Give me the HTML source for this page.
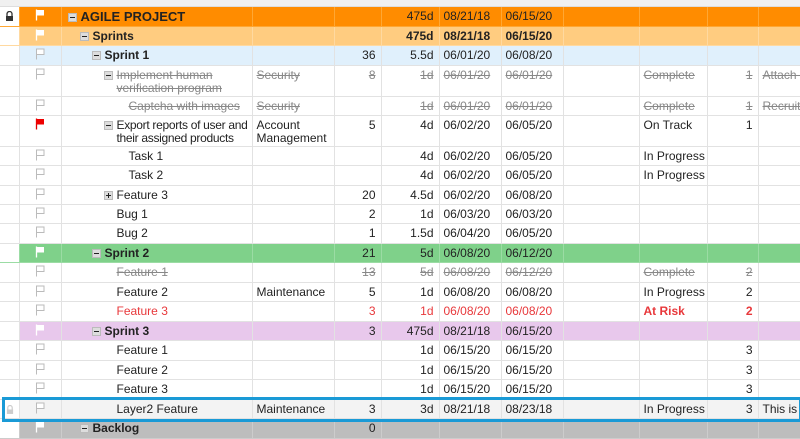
<!DOCTYPE html><html><head><style>
body{margin:0;width:800px;height:438px;overflow:hidden;background:#fff;font-family:"Liberation Sans",Arial,sans-serif;font-size:12px;color:#222}
.top{position:absolute;left:0;top:0;width:800px;height:7px;background:#f0f0f0;border-bottom:1px solid #ddd;box-sizing:border-box}
table{position:absolute;left:0;top:7px;border-collapse:collapse;table-layout:fixed;width:800px}
td{border-right:1px solid #e2e2e2;border-bottom:1px solid #e2e2e2;padding:3px 4px 0 4px;vertical-align:top;white-space:nowrap;overflow:hidden;line-height:13px;box-sizing:border-box}
td.r{text-align:right;padding-right:5px}
td.f{padding:2px 0 0 0}
td.f svg{display:block;margin:0 auto}
.b td{font-weight:bold}
.bx{display:inline-block;width:9px;height:9px;background:#ddd;border:1px solid #bbb;box-sizing:border-box;margin-right:4px;vertical-align:-1px;position:relative}
.bx:after{content:"";position:absolute;left:1px;top:3px;width:5px;height:1px;background:#222}
.pl:before{content:"";position:absolute;left:3px;top:1px;width:1px;height:5px;background:#222}
.s{text-decoration:line-through;color:#888}
.red td{color:#e8383b}
.o td{background:#ff8c00;border-color:#ffa733}
.lo td{background:#ffcc80;border-color:#ffd9a0}
.lb td{background:#e0f0fc}
.g td{background:#7fd18a;border-color:#9bdca4}
.p td{background:#e8c8ec}
.gr td{background:#bdbdbd;border-color:#ccc}
.sel td{background:#f3f3f3}
tr td:first-child{background:#fff}
.box{position:absolute;left:2px;top:397px;width:800px;height:25px;border:3px solid #1a9ad6;box-sizing:border-box}
</style></head><body>
<div class="top"></div>
<svg width="0" height="0" style="position:absolute"><defs>
<symbol id="fl" viewBox="0 0 10 12"><path d="M1.5 0.5V11.5M1.5 1H9V6.5H1.5" fill="#fff" stroke="#bbb" stroke-width="1"/></symbol>
<symbol id="fw" viewBox="0 0 10 12"><path d="M1.5 0.5V11.5" stroke="#fff" stroke-width="1.3"/><path d="M1 1H9V6.5H1z" fill="#fff"/></symbol>
<symbol id="fr" viewBox="0 0 10 12"><path d="M1.5 0.5V11.5" stroke="#d00" stroke-width="1.3"/><path d="M1 1H9V6.5H1z" fill="#e00"/></symbol>
</defs></svg>
<table>
<colgroup><col style="width:19px"><col style="width:42px"><col style="width:191px"><col style="width:82px"><col style="width:47px"><col style="width:58px"><col style="width:62px"><col style="width:62px"><col style="width:76px"><col style="width:68px"><col style="width:51px"><col style="width:42px"></colgroup>
<tr class="o" style="height:19px"><td style="padding:4px 0 0 5px"><svg width="9" height="10" viewBox="0 0 9 10" style="display:block"><path d="M2 5V3a2.5 2.5 0 0 1 5 0v2" fill="none" stroke="#333" stroke-width="1.3"/><rect x="1" y="5" width="7" height="5" fill="#333"/></svg></td><td class="f"><svg width="10" height="12"><use href="#fw"/></svg></td><td style="padding-left:6px;font-weight:bold;font-size:13px;padding-top:2px;line-height:15px"><span class="bx"></span>AGILE PROJECT</td><td></td><td></td><td class="r">475d</td><td>08/21/18</td><td>06/15/20</td><td></td><td></td><td></td><td></td></tr>
<tr class="lo b" style="height:19px"><td></td><td class="f"><svg width="10" height="12"><use href="#fw"/></svg></td><td style="padding-left:18px"><span class="bx"></span>Sprints</td><td></td><td></td><td class="r">475d</td><td>08/21/18</td><td>06/15/20</td><td></td><td></td><td></td><td></td></tr>
<tr class="lb" style="height:20px"><td></td><td class="f"><svg width="10" height="12"><use href="#fl"/></svg></td><td style="padding-left:30px;font-weight:bold"><span class="bx"></span>Sprint 1</td><td></td><td class="r">36</td><td class="r">5.5d</td><td>06/01/20</td><td>06/08/20</td><td></td><td></td><td></td><td></td></tr>
<tr style="height:31px"><td></td><td class="f"><svg width="10" height="12"><use href="#fl"/></svg></td><td style="padding-left:42px;position:relative"><span class="bx" style="position:absolute;left:42px;top:5px"></span><div class="s" style="padding-left:13px;line-height:13px">Implement human<br>verification program</div></td><td class="s">Security</td><td class="r s">8</td><td class="r s">1d</td><td class="s">06/01/20</td><td class="s">06/01/20</td><td></td><td class="s">Complete</td><td class="r s">1</td><td class="s">Attach the</td></tr>
<tr style="height:19px"><td></td><td class="f"><svg width="10" height="12"><use href="#fl"/></svg></td><td style="padding-left:67px" class="s">Captcha with images</td><td class="s">Security</td><td></td><td class="r s">1d</td><td class="s">06/01/20</td><td class="s">06/01/20</td><td></td><td class="s">Complete</td><td class="r s">1</td><td class="s">Recruited</td></tr>
<tr style="height:31px"><td></td><td class="f"><svg width="10" height="12"><use href="#fr"/></svg></td><td style="padding-left:42px;position:relative"><span class="bx" style="position:absolute;left:42px;top:5px"></span><div style="padding-left:13px;letter-spacing:-0.3px">Export reports of user and<br>their assigned products</div></td><td>Account<br>Management</td><td class="r">5</td><td class="r">4d</td><td>06/02/20</td><td>06/05/20</td><td></td><td>On Track</td><td class="r">1</td><td></td></tr>
<tr style="height:19px"><td></td><td class="f"><svg width="10" height="12"><use href="#fl"/></svg></td><td style="padding-left:67px">Task 1</td><td></td><td></td><td class="r">4d</td><td>06/02/20</td><td>06/05/20</td><td></td><td>In Progress</td><td></td><td></td></tr>
<tr style="height:20px"><td></td><td class="f"><svg width="10" height="12"><use href="#fl"/></svg></td><td style="padding-left:67px">Task 2</td><td></td><td></td><td class="r">4d</td><td>06/02/20</td><td>06/05/20</td><td></td><td>In Progress</td><td></td><td></td></tr>
<tr style="height:19px"><td></td><td class="f"><svg width="10" height="12"><use href="#fl"/></svg></td><td style="padding-left:42px"><span class="bx pl"></span>Feature 3</td><td></td><td class="r">20</td><td class="r">4.5d</td><td>06/02/20</td><td>06/08/20</td><td></td><td></td><td></td><td></td></tr>
<tr style="height:19px"><td></td><td class="f"><svg width="10" height="12"><use href="#fl"/></svg></td><td style="padding-left:55px">Bug 1</td><td></td><td class="r">2</td><td class="r">1d</td><td>06/03/20</td><td>06/03/20</td><td></td><td></td><td></td><td></td></tr>
<tr style="height:20px"><td></td><td class="f"><svg width="10" height="12"><use href="#fl"/></svg></td><td style="padding-left:55px">Bug 2</td><td></td><td class="r">1</td><td class="r">1.5d</td><td>06/04/20</td><td>06/05/20</td><td></td><td></td><td></td><td></td></tr>
<tr class="g b" style="height:19px"><td></td><td class="f"><svg width="10" height="12"><use href="#fw"/></svg></td><td style="padding-left:30px"><span class="bx"></span>Sprint 2</td><td></td><td class="r" style="font-weight:normal">21</td><td class="r" style="font-weight:normal">5d</td><td style="font-weight:normal">06/08/20</td><td style="font-weight:normal">06/12/20</td><td></td><td></td><td></td><td></td></tr>
<tr style="height:20px"><td></td><td class="f"><svg width="10" height="12"><use href="#fl"/></svg></td><td style="padding-left:55px" class="s">Feature 1</td><td></td><td class="r s">13</td><td class="r s">5d</td><td class="s">06/08/20</td><td class="s">06/12/20</td><td></td><td class="s">Complete</td><td class="r s">2</td><td></td></tr>
<tr style="height:19px"><td></td><td class="f"><svg width="10" height="12"><use href="#fl"/></svg></td><td style="padding-left:55px">Feature 2</td><td>Maintenance</td><td class="r">5</td><td class="r">1d</td><td>06/08/20</td><td>06/08/20</td><td></td><td>In Progress</td><td class="r">2</td><td></td></tr>
<tr class="red" style="height:20px"><td></td><td class="f"><svg width="10" height="12"><use href="#fl"/></svg></td><td style="padding-left:55px">Feature 3</td><td></td><td class="r">3</td><td class="r">1d</td><td>06/08/20</td><td>06/08/20</td><td></td><td style="font-weight:bold">At Risk</td><td class="r" style="font-weight:bold">2</td><td></td></tr>
<tr class="p" style="height:19px"><td></td><td class="f"><svg width="10" height="12"><use href="#fw"/></svg></td><td style="padding-left:30px;font-weight:bold"><span class="bx"></span>Sprint 3</td><td></td><td class="r">3</td><td class="r">475d</td><td>08/21/18</td><td>06/15/20</td><td></td><td></td><td></td><td></td></tr>
<tr style="height:20px"><td></td><td class="f"><svg width="10" height="12"><use href="#fl"/></svg></td><td style="padding-left:55px">Feature 1</td><td></td><td></td><td class="r">1d</td><td>06/15/20</td><td>06/15/20</td><td></td><td></td><td class="r">3</td><td></td></tr>
<tr style="height:19px"><td></td><td class="f"><svg width="10" height="12"><use href="#fl"/></svg></td><td style="padding-left:55px">Feature 2</td><td></td><td></td><td class="r">1d</td><td>06/15/20</td><td>06/15/20</td><td></td><td></td><td class="r">3</td><td></td></tr>
<tr style="height:20px"><td></td><td class="f"><svg width="10" height="12"><use href="#fl"/></svg></td><td style="padding-left:55px">Feature 3</td><td></td><td></td><td class="r">1d</td><td>06/15/20</td><td>06/15/20</td><td></td><td></td><td class="r">3</td><td></td></tr>
<tr class="sel" style="height:19px"><td style="padding:5px 0 0 6px"><svg width="8" height="9" viewBox="0 0 9 10" style="display:block"><path d="M2 5V3a2.5 2.5 0 0 1 5 0v2" fill="none" stroke="#ccc" stroke-width="1.3"/><rect x="1" y="5" width="7" height="5" fill="#ccc"/></svg></td><td class="f"><svg width="10" height="12"><use href="#fl"/></svg></td><td style="padding-left:55px">Layer2 Feature</td><td>Maintenance</td><td class="r">3</td><td class="r">3d</td><td>08/21/18</td><td>08/23/18</td><td></td><td>In Progress</td><td class="r">3</td><td>This is n</td></tr>
<tr class="gr b" style="height:20px"><td></td><td class="f"><svg width="10" height="12"><use href="#fw"/></svg></td><td style="padding-left:18px"><span class="bx"></span>Backlog</td><td></td><td class="r" style="font-weight:normal">0</td><td></td><td></td><td></td><td></td><td></td><td></td><td></td></tr>
</table>
<div class="box"></div>
</body></html>
